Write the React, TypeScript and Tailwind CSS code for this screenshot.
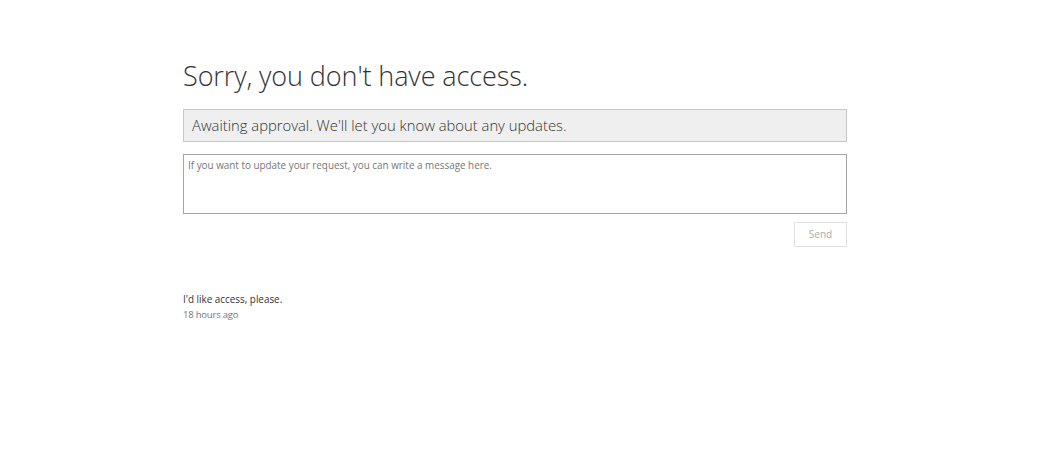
export default function App() {
    return (
        <div className="min-h-[450px] bg-white font-['Open_Sans',sans-serif] text-[#262626]">
            <div className="ml-[183px] w-[664px] pt-[56px]">
                <h1 className="text-[27px] leading-[40px] font-light tracking-[-0.1px] text-[#333]">Sorry, you don't have access.</h1>
                <div className="mt-[13px] flex h-[33px] items-center border border-[#c6c6c6] bg-[#efefef] px-[8px] text-[14.8px] font-light text-[#333]">
                    Awaiting approval. We'll let you know about any updates.
                </div>
                <textarea
                    className="mt-[12px] block h-[60px] w-full resize-none border border-[#a6a6a6] px-[4px] py-[3px] text-[9.9px] leading-[14px] text-[#333] outline-none placeholder:text-[#777]"
                    placeholder="If you want to update your request, you can write a message here."
                />
                <div className="mt-[8px] flex justify-end">
                    <button className="h-[25px] w-[53px] border border-[#e1e1e1] bg-white text-[10px] text-[#aaa]">Send</button>
                </div>
                <div className="mt-[44px] flex flex-col">
                    <span className="text-[9.9px] leading-[16px] text-[#333]">I'd like access, please.</span>
                    <span className="text-[9.5px] leading-[16px] tracking-[-0.2px] text-[#777]">18 hours ago</span>
                </div>
            </div>
        </div>
    );
}
